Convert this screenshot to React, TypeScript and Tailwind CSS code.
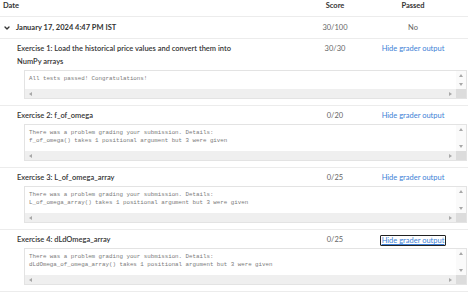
import { ChevronDown } from 'lucide-react'

type Exercise = {
  title: string
  score: string
  lines: string[]
  focused?: boolean
}

const exercises: Exercise[] = [
  {
    title: 'Exercise 1: Load the historical price values and convert them into NumPy arrays',
    score: '30/30',
    lines: ['All tests passed! Congratulations!'],
  },
  {
    title: 'Exercise 2: f_of_omega',
    score: '0/20',
    lines: [
      'There was a problem grading your submission. Details:',
      'f_of_omega() takes 1 positional argument but 3 were given',
    ],
  },
  {
    title: 'Exercise 3: L_of_omega_array',
    score: '0/25',
    lines: [
      'There was a problem grading your submission. Details:',
      'L_of_omega_array() takes 1 positional argument but 3 were given',
    ],
  },
  {
    title: 'Exercise 4: dLdOmega_array',
    score: '0/25',
    lines: [
      'There was a problem grading your submission. Details:',
      'dLdOmega_of_omega_array() takes 1 positional argument but 3 were given',
    ],
    focused: true,
  },
]

function OutputBox({ lines }: { lines: string[] }) {
  return (
    <div className="mt-[2px] ml-[7px] w-[443px] border border-[#e3e3e3] bg-white flex flex-col">
      <div className="flex">
        <div className="flex-1 overflow-hidden pt-[4px] pb-[6px] pl-[4px] font-['Liberation_Mono',monospace] text-[5.8px] leading-[8px] text-[#7a7a7a] whitespace-pre">
          {lines.map((l) => (
            <div key={l}>{l}</div>
          ))}
        </div>
        <div className="w-[10px] bg-[#fafafa] flex flex-col items-center justify-between py-[3px] text-[#a0a0a0]">
          <span className="w-0 h-0 border-l-[2.5px] border-r-[2.5px] border-b-[3px] border-l-transparent border-r-transparent border-b-[#a8a8a8]" />
          <span className="w-0 h-0 border-l-[2.5px] border-r-[2.5px] border-t-[3px] border-l-transparent border-r-transparent border-t-[#a8a8a8]" />
        </div>
      </div>
      <div className="flex h-[9px]">
        <div className="flex-1 bg-[#efefef] flex items-center justify-between px-[4px]">
          <span className="w-0 h-0 border-t-[2.5px] border-b-[2.5px] border-r-[3px] border-t-transparent border-b-transparent border-r-[#a8a8a8]" />
          <span className="w-0 h-0 border-t-[2.5px] border-b-[2.5px] border-l-[3px] border-t-transparent border-b-transparent border-l-[#a8a8a8]" />
        </div>
        <div className="w-[10px] bg-[#dcdcdc]" />
      </div>
    </div>
  )
}

export default function App() {
  return (
    <div className="w-[474px] h-[299px] overflow-hidden bg-white font-['Lato','Liberation_Sans',sans-serif] text-[7.5px] text-[#333]">
      <div className="w-[468px]">
        {/* table header */}
        <div className="flex h-[17px] border-b border-[#ececec] font-bold leading-[12px]">
          <div className="w-[300px] pl-[3px]">Date</div>
          <div className="w-[70px] text-center">Score</div>
          <div className="w-[86px] text-center">Passed</div>
        </div>

        {/* submission row */}
        <div className="flex items-center h-[22px] border-b border-[#ececec]">
          <div className="w-[300px] flex items-center pl-[3px] font-bold">
            <ChevronDown className="w-[8px] h-[8px] mr-[5px]" strokeWidth={4} />
            January 17, 2024 4:47 PM IST
          </div>
          <div className="w-[70px] text-center text-[#666]">30/100</div>
          <div className="w-[86px] text-center text-[#666]">No</div>
        </div>

        {exercises.map((ex) => (
          <div key={ex.title} className="pl-[17px] pt-[3px] pb-[6px] border-b border-[#ececec]">
            <div className="flex leading-[13px]">
              <div className="w-[283px]">
                <div className="w-[220px] font-semibold">{ex.title}</div>
              </div>
              <div className="w-[70px] text-center text-[#666]">{ex.score}</div>
              <div className="w-[86px] flex justify-center">
                <span
                  className={
                    ex.focused
                      ? 'text-[#3d7fd6] leading-[9px] border border-[#222] rounded-[1px] px-[1px] mt-[2px] underline'
                      : 'text-[#3d7fd6]'
                  }
                >
                  Hide grader output
                </span>
              </div>
            </div>
            <OutputBox lines={ex.lines} />
          </div>
        ))}
      </div>
    </div>
  )
}
